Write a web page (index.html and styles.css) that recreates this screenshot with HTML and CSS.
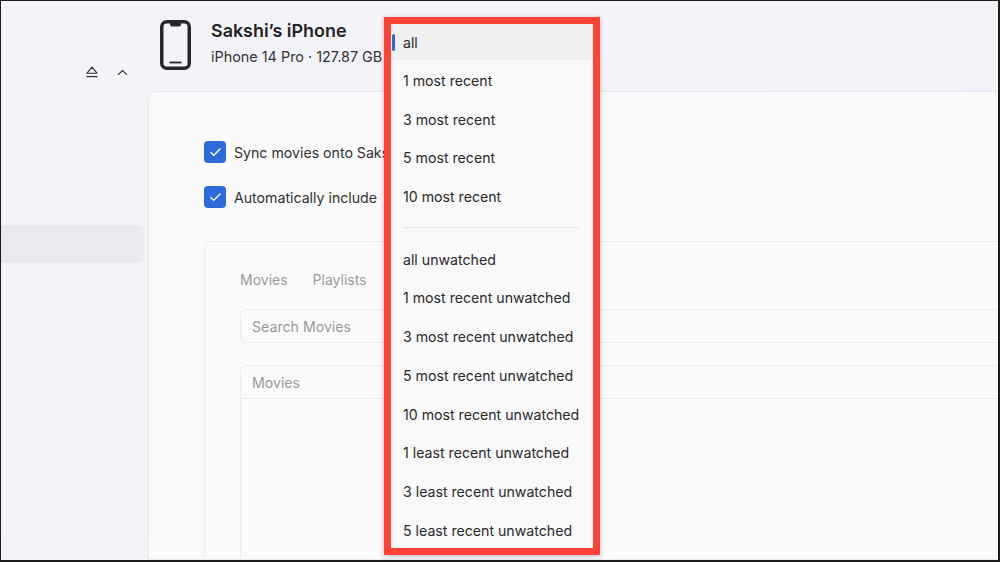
FILE: index.html
```html
<!DOCTYPE html>
<html lang="en">
<head>
<meta charset="utf-8">
<title>Sakshi's iPhone</title>
<link rel="stylesheet" href="styles.css">
</head>
<body>
<div class="app">
  <aside class="sidebar">
    <div class="side-controls">
      <svg class="eject" width="14" height="13" viewBox="0 0 14 13"><path d="M7 1.200 12 7.200H2Z" fill="none" stroke="#2c2c2e" stroke-width="1.100" stroke-linejoin="round"/><path d="M1.500 10.600H12.500" stroke="#2c2c2e" stroke-width="1.200"/></svg>
      <svg class="chev" width="11" height="7" viewBox="0 0 11 7"><path d="M1 5.800 5.500 1.500 10 5.800" fill="none" stroke="#2c2c2e" stroke-width="1.100"/></svg>
    </div>
    <div class="side-item"></div>
  </aside>
  <main class="main">
    <header class="device">
      <svg class="phone" width="31" height="50" viewBox="0 0 31 50"><rect x="1.750" y="1.750" width="27.500" height="46.500" rx="5" fill="none" stroke="#272729" stroke-width="3.500"/><path d="M10 2.500H21V4.500Q21 6.500 19 6.500H12Q10 6.500 10 4.500Z" fill="#272729"/><path d="M9.500 42.500H21.500" stroke="#272729" stroke-width="1.800"/></svg>
      <div class="device-text">
        <h1 class="device-name">Sakshi’s iPhone</h1>
        <p class="device-meta">iPhone 14 Pro · 127.87 GB</p>
      </div>
    </header>
    <section class="panel">
      <div class="check-row"><span class="check"><svg width="13" height="10" viewBox="0 0 13 10"><path d="M1.500 5.200 4.800 8.300 11.500 1.500" fill="none" stroke="#fff" stroke-width="1.300"/></svg></span><span>Sync movies onto Saks</span></div>
      <div class="check-row second"><span class="check"><svg width="13" height="10" viewBox="0 0 13 10"><path d="M1.500 5.200 4.800 8.300 11.500 1.500" fill="none" stroke="#fff" stroke-width="1.300"/></svg></span><span>Automatically include</span></div>
      <div class="content-box">
        <nav class="tabs"><span>Movies</span><span>Playlists</span></nav>
        <div class="search">Search Movies</div>
        <div class="list">
          <div class="list-head">Movies</div>
        </div>
      </div>
    </section>
  </main>
</div>
<div class="menu-frame">
  <ul class="menu">
    <li class="item active">all</li>
    <li class="item">1 most recent</li>
    <li class="item">3 most recent</li>
    <li class="item">5 most recent</li>
    <li class="item">10 most recent</li>
    <li class="sep"></li>
    <li class="item">all unwatched</li>
    <li class="item">1 most recent unwatched</li>
    <li class="item">3 most recent unwatched</li>
    <li class="item">5 most recent unwatched</li>
    <li class="item">10 most recent unwatched</li>
    <li class="item">1 least recent unwatched</li>
    <li class="item">3 least recent unwatched</li>
    <li class="item">5 least recent unwatched</li>
  </ul>
</div>
</body>
</html>
```
FILE: styles.css
```css
* { box-sizing: border-box; }
html, body { margin: 0; height: 100%; }
body {
  width: 1000px;
  height: 562px;
  overflow: hidden;
  position: relative;
  font-family: Inter, "Liberation Sans", sans-serif;
  color: #2a2a2c;
  background: #f3f4f9;
}
.app {
  display: flex;
  width: 1000px;
  height: 562px;
  border-style: solid;
  border-color: #1c1c1c;
  border-width: 1px 2px 2px 1px;
  background: linear-gradient(150deg, #f3f4f9 45%, #eff2fa 75%, #eef3f8 100%);
  overflow: hidden;
}
.sidebar {
  flex: 0 0 147px;
  padding-top: 64px;
}
.side-controls {
  display: flex;
  align-items: center;
  justify-content: flex-end;
  gap: 18px;
  padding-right: 20px;
  height: 14px;
}
.side-item {
  margin-top: 146px;
  width: 143px;
  height: 38px;
  background: #e9eaef;
  border-radius: 0 5px 5px 0;
}
.main {
  flex: 1;
  min-width: 0;
  display: flex;
  flex-direction: column;
}
.device {
  flex: none;
  display: flex;
  align-items: flex-start;
  height: 90px;
  padding: 19px 0 0 12px;
  gap: 20px;
}
.device-text { padding-top: 1px; }
.device-name {
  margin: 0;
  font-size: 17.900px;
  line-height: 20px;
  font-weight: 600;
  color: #242426;
}
.device-meta {
  margin: 7px 0 0;
  font-size: 14.400px;
  line-height: 18px;
  color: #333335;
}
.panel {
  flex: 1;
  min-height: 0;
  background: #fafafa;
  border: 1px solid #e9e9ed;
  border-right: 0;
  border-radius: 8px 0 0 0;
  padding: 49px 0 0 55px;
}
.check-row {
  display: flex;
  align-items: center;
  gap: 8px;
  height: 22px;
  font-size: 14.150px;
  color: #333335;
  white-space: nowrap;
}
.check-row.second { margin-top: 23px; }
.check {
  flex: none;
  width: 22px;
  height: 22px;
  border-radius: 4px;
  background: #2d6bdc;
  display: flex;
  align-items: center;
  justify-content: center;
}
.content-box {
  margin-top: 33px;
  height: 340px;
  border: 1px solid #ececec;
  border-right: 0;
  border-radius: 8px 0 0 0;
  padding: 29px 0 0 35px;
}
.tabs {
  display: flex;
  gap: 25px;
  font-size: 14px;
  line-height: 18px;
  color: #9b9b9d;
}
.search {
  margin-top: 20px;
  height: 34px;
  border: 1px solid #ececec;
  border-right: 0;
  border-radius: 6px 0 0 6px;
  padding-left: 11px;
  font-size: 14.150px;
  line-height: 34px;
  color: #9b9b9d;
}
.list {
  margin-top: 22px;
  height: 220px;
  border: 1px solid #ececec;
  border-right: 0;
  border-radius: 6px 0 0 0;
}
.list-head {
  height: 33px;
  border-bottom: 1px solid #ececec;
  padding-left: 11px;
  font-size: 14.150px;
  line-height: 33px;
  color: #9b9b9d;
}
.menu-frame {
  position: absolute;
  left: 384px;
  top: 17px;
  width: 216px;
  height: 538px;
  border: 7px solid #ff4136;
  box-shadow: 0 1px 5px rgba(0, 0, 0, 0.25);
  overflow: hidden;
}
.menu {
  list-style: none;
  margin: 0;
  padding: 0;
  height: 100%;
  background: #f9f9f9;
}
.item {
  position: relative;
  height: 38.700px;
  padding-left: 12px;
  font-size: 14.150px;
  line-height: 38.900px;
  white-space: nowrap;
  color: #2a2a2c;
}
.item.active {
  height: 36px;
  line-height: 38px;
  margin-bottom: 2px;
  background: #f0f0f0;
}
.item.active::before {
  content: "";
  position: absolute;
  left: 1px;
  top: 10px;
  width: 3px;
  height: 17px;
  border-radius: 2px;
  background: #2d6bdc;
}
.sep {
  height: 1px;
  margin: 10px 13px 13px 12px;
  background: #e6e6e6;
}
```
